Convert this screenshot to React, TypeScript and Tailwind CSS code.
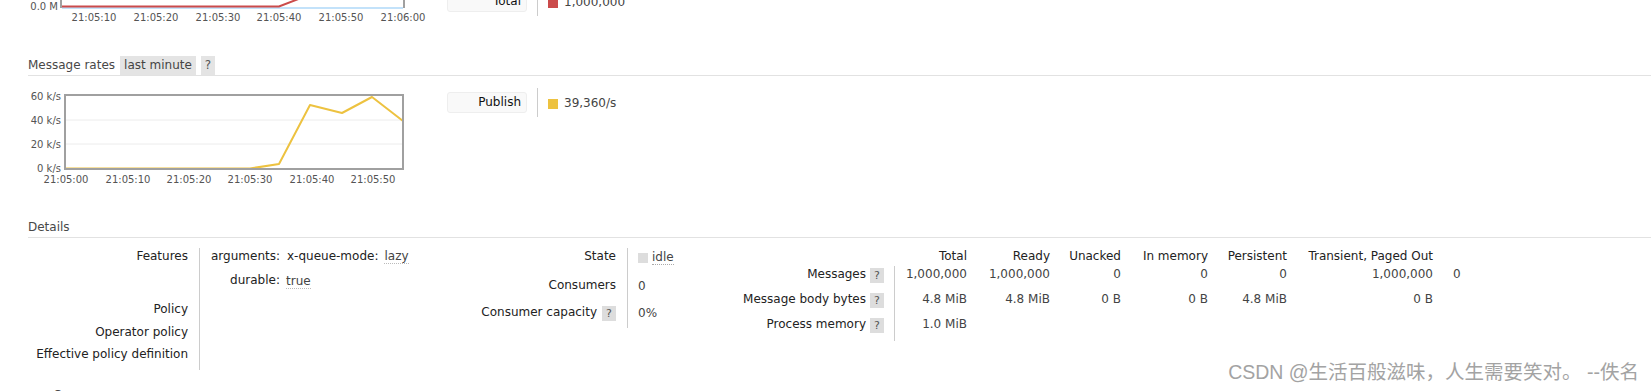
import React from 'react';

function Help() {
  return (
    <span className="inline-block h-[15px] w-[14px] bg-[#dddddd] text-center text-[11px] leading-[15px] text-[#555]">?</span>
  );
}

interface LegendProps {
  label: string;
  value: string;
  color: string;
  className?: string;
}

function Legend({ label, value, color, className }: LegendProps) {
  return (
    <div className={`flex items-start ${className ?? ''}`}>
      <div className="mt-[4px] h-[21px] w-[80px] rounded-[3px] border border-[#eeeeee] bg-[#f9f9f9] pr-[5px] text-right leading-[19px] text-[#111]">
        {label}
      </div>
      <div className="ml-[10px] h-[29px] w-px bg-[#cccccc]" />
      <div className={`ml-[10px] mt-[11px] h-[10px] w-[10px] ${color}`} />
      <div className="ml-[6px] mt-[7px] leading-[16px] text-[#444]">{value}</div>
    </div>
  );
}

function SectionHeader({ children }: { children: React.ReactNode }) {
  return (
    <div className="flex h-[20px] items-start gap-[5px] border-b border-[#e2e2e2] leading-[19px] text-[#484848]">
      {children}
    </div>
  );
}

const axisFont = { fontFamily: '"DejaVu Sans", sans-serif', fontSize: 10 };

function TopChartTail() {
  const labels = ['21:05:10', '21:05:20', '21:05:30', '21:05:40', '21:05:50', '21:06:00'];
  const xs = [66, 128, 190, 251, 313, 375];
  return (
    <svg width="402" height="24" className="block shrink-0">
      <line x1="33" y1="0" x2="33" y2="8" stroke="#a0a0a0" strokeWidth="2" />
      <line x1="376" y1="0" x2="376" y2="8" stroke="#a0a0a0" strokeWidth="2" />
      <line x1="34" y1="8" x2="375" y2="8" stroke="#afd8f8" strokeWidth="1.5" />
      <polyline points="34,6.5 251,6.5 273,-2" fill="none" stroke="#cb4b4b" strokeWidth="2" />
      <text x="30" y="7" textAnchor="end" dominantBaseline="middle" fill="#545454" style={axisFont}>
        0.0 M
      </text>
      {labels.map((l, i) => (
        <text key={l} x={xs[i]} y="18" textAnchor="middle" dominantBaseline="middle" fill="#545454" style={axisFont}>
          {l}
        </text>
      ))}
    </svg>
  );
}

function RateChart() {
  const yLabels = [
    { t: '60 k/s', y: 11 },
    { t: '40 k/s', y: 35 },
    { t: '20 k/s', y: 59 },
    { t: '0 k/s', y: 83 },
  ];
  const xLabels = ['21:05:00', '21:05:10', '21:05:20', '21:05:30', '21:05:40', '21:05:50'];
  const xs = [38, 100, 161, 222, 284, 345];
  return (
    <svg width="402" height="100" className="block shrink-0">
      <line x1="38" y1="34" x2="375" y2="34" stroke="#ececec" />
      <line x1="38" y1="58" x2="375" y2="58" stroke="#ececec" />
      <polyline
        points="37,82.5 222,82.5 251,78 282,19 314,27 344,11 375,35"
        fill="none"
        stroke="#edc240"
        strokeWidth="2"
        strokeLinejoin="round"
      />
      <rect x="37" y="9" width="338" height="74" fill="none" stroke="#a0a0a0" strokeWidth="2" />
      {yLabels.map((l) => (
        <text key={l.t} x="33" y={l.y} textAnchor="end" dominantBaseline="middle" fill="#545454" style={axisFont}>
          {l.t}
        </text>
      ))}
      {xLabels.map((l, i) => (
        <text key={l} x={xs[i]} y="94" textAnchor="middle" dominantBaseline="middle" fill="#545454" style={axisFont}>
          {l}
        </text>
      ))}
    </svg>
  );
}

const cols = ['w-[72px]', 'w-[83px]', 'w-[71px]', 'w-[87px]', 'w-[79px]', 'w-[146px]'];
const headers = ['Total', 'Ready', 'Unacked', 'In memory', 'Persistent', 'Transient, Paged Out'];
const rows: { label: string; cells: string[]; extra?: string }[] = [
  { label: 'Messages', cells: ['1,000,000', '1,000,000', '0', '0', '0', '1,000,000'], extra: '0' },
  { label: 'Message body bytes', cells: ['4.8 MiB', '4.8 MiB', '0 B', '0 B', '4.8 MiB', '0 B'] },
  { label: 'Process memory', cells: ['1.0 MiB', '', '', '', '', ''] },
];

export default function App() {
  return (
    <div className="relative h-[391px] overflow-hidden bg-white pl-[28px] font-['DejaVu_Sans',sans-serif] text-[12px]">
      {/* tail of the queued messages chart */}
      <div className="flex h-[24px] items-start">
        <TopChartTail />
        <Legend label="Total" value="1,000,000" color="bg-[#cb4b4b]" className="-mt-[13px] ml-[17px]" />
      </div>

      <div className="mt-[32px]">
        <SectionHeader>
          <span>Message rates</span>
          <span className="bg-[#e4e4e4] px-[4px] text-[#444]">last minute</span>
          <span className="w-[14px] bg-[#e4e4e4] text-center text-[#555]">?</span>
        </SectionHeader>
      </div>

      <div className="mt-[10px] flex items-start">
        <RateChart />
        <Legend label="Publish" value="39,360/s" color="bg-[#edc240]" className="ml-[17px] mt-[2px]" />
      </div>

      <div className="mt-[32px]">
        <SectionHeader>
          <span>Details</span>
        </SectionHeader>
      </div>

      <div className="mt-[10px] flex items-start">
        {/* features / policy */}
        <div className="flex w-[412px]">
          <div className="w-[171px] pr-[11px] text-right text-[#222]">
            <div className="h-[53px] leading-[16px]">Features</div>
            <div className="h-[23px] leading-[16px]">Policy</div>
            <div className="h-[22px] leading-[16px]">Operator policy</div>
            <div className="h-[22px] leading-[16px]">Effective policy definition</div>
          </div>
          <div className="h-[122px] border-l border-[#cccccc] pl-[11px]">
            <div className="flex h-[24px] leading-[16px]">
              <span className="w-[69px] text-right text-[#222]">arguments:</span>
              <span className="ml-[7px] text-[#222]">x-queue-mode:</span>
              <span className="ml-[6px] h-[16px] self-start border-b border-dotted border-[#bbbbbb] leading-[17px] text-[#444]">lazy</span>
            </div>
            <div className="flex h-[24px] leading-[16px]">
              <span className="w-[69px] text-right text-[#222]">durable:</span>
              <span className="ml-[6px] h-[17px] self-start border-b border-dotted border-[#bbbbbb] leading-[18px] text-[#444]">true</span>
            </div>
          </div>
        </div>

        {/* state / consumers */}
        <div className="flex w-[260px]">
          <div className="w-[187px] pr-[11px] text-right text-[#222]">
            <div className="h-[29px] leading-[16px]">State</div>
            <div className="h-[27px] leading-[16px]">Consumers</div>
            <div className="flex h-[24px] items-start justify-end gap-[5px] leading-[16px]">
              <span>Consumer capacity</span>
              <span className="mt-px">
                <Help />
              </span>
            </div>
          </div>
          <div className="h-[80px] border-l border-[#cccccc] pl-[10px] text-[#444]">
            <div className="flex h-[29px] items-start leading-[16px]">
              <span className="mt-[5px] h-[10px] w-[10px] bg-[#dddddd]" />
              <span className="ml-[4px] h-[17px] border-b border-dotted border-[#aaaaaa] leading-[19px]">idle</span>
            </div>
            <div className="h-[27px] leading-[19px]">0</div>
            <div className="h-[24px] leading-[19px]">0%</div>
          </div>
        </div>

        {/* message counts */}
        <div className="flex">
          <div className="w-[194px] pr-[10px] pt-[18px] text-right text-[#222]">
            {rows.map((r) => (
              <div key={r.label} className="flex h-[25px] items-start justify-end gap-[4px] leading-[16px]">
                <span>{r.label}</span>
                <span className="mt-px">
                  <Help />
                </span>
              </div>
            ))}
          </div>
          <div>
            <div className="flex h-[18px] pl-px leading-[16px] text-[#222]">
              {headers.map((h, i) => (
                <div key={h} className={`${cols[i]} whitespace-nowrap text-right`}>
                  {h}
                </div>
              ))}
            </div>
            <div className="border-l border-[#cccccc] text-[#444]">
              {rows.map((r) => (
                <div key={r.label} className="flex h-[25px] leading-[16px]">
                  {r.cells.map((c, i) => (
                    <div key={i} className={`${cols[i]} whitespace-nowrap text-right`}>
                      {c}
                    </div>
                  ))}
                  {r.extra && <div className="pl-[20px]">{r.extra}</div>}
                </div>
              ))}
            </div>
          </div>
        </div>
      </div>

      <div className="mt-[17px] flex items-start pl-[9px] leading-[16px] text-[#484848]">
        <span className="text-[10px] text-[#777]">▸</span>
        <span className="ml-[11px]">Consumers</span>
      </div>

      <div className="absolute right-[12px] top-[360px] font-['Liberation_Sans','Noto_Sans_CJK_SC',sans-serif] text-[19.5px] leading-[24px] text-[#a3a3a3] [text-shadow:0_0_1px_#fff]">
        CSDN @生活百般滋味，人生需要笑对。 --佚名
      </div>
    </div>
  );
}
